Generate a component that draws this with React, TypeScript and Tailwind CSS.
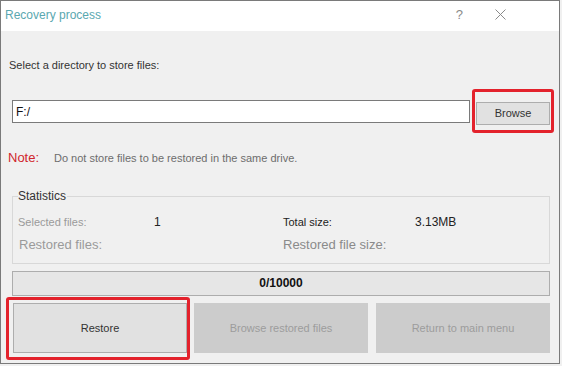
import React from "react";

function RedMark({ className }: { className: string }) {
  // annotation frame drawn over the control
  return <div className={`pointer-events-none absolute border-[3px] border-[#e3222c] rounded-[3px] ${className}`} />;
}

export default function App() {
  return (
    <div className="w-[562px] h-[366px] bg-[#f0f0f0] font-['Liberation_Sans',Arial,sans-serif]">
      <div className="w-[560px] h-[364px] border border-[#7a7a7a] flex flex-col bg-[#f0f0f0]">
        {/* title bar */}
        <div className="h-[30px] bg-white flex items-center pl-[4px] pb-[3px] shrink-0">
          <span className="text-[12px] text-[#5aa8b0]">Recovery process</span>
          <span className="ml-auto text-[13px] text-[#8a8a8a] mr-[32px]">?</span>
          <svg width="11" height="11" viewBox="0 0 11 11" className="mr-[53px]">
            <path d="M0.5 0.5 L10.5 10.5 M10.5 0.5 L0.5 10.5" stroke="#8a8a8a" strokeWidth="1" />
          </svg>
        </div>

        <div className="flex flex-col">
          <div className="mt-[28px] pl-[8px] text-[11px] leading-[13px] text-[#333]">
            Select a directory to store files:
          </div>

          <div className="mt-[28px] ml-[11px] flex items-start">
            <div className="w-[458px] h-[23px] bg-white border border-[#7a7a7a] flex items-center pl-[3px] text-[12px] text-[#111]">
              F:/
            </div>
            <div className="relative ml-[6px]">
              <button className="w-[74px] h-[23px] bg-[#e1e1e1] border border-[#adadad] text-[11px] text-[#333]">
                Browse
              </button>
              <RedMark className="-left-[4px] -top-[11px] -right-[4px] -bottom-[8px]" />
            </div>
          </div>

          <div className="mt-[25px] pl-[7px] flex items-center h-[16px]">
            <span className="text-[13px] text-[#d0262d] w-[46px]">Note:</span>
            <span className="text-[11px] text-[#6d6d6d]">Do not store files to be restored in the same drive.</span>
          </div>

          {/* statistics group */}
          <div className="relative mt-[30px] ml-[11px] w-[538px] h-[68px] border border-[#d8d8d8]">
            <span className="absolute left-[5px] -top-[8px] text-[12px] leading-[14px] text-[#333] bg-[#f0f0f0] pr-[1px]">
              Statistics
            </span>
            <div className="pl-[5px] pt-[18px] grid grid-cols-[136px_129px_132px_1fr] items-center">
              <span className="text-[11px] leading-[14px] text-[#9a9a9a]">Selected files:</span>
              <span className="text-[12px] leading-[14px] text-[#222]">1</span>
              <span className="text-[11px] leading-[14px] text-[#222]">Total size:</span>
              <span className="text-[12px] leading-[14px] text-[#222]">3.13MB</span>
              <span className="mt-[8px] text-[13px] leading-[16px] text-[#9a9a9a] pl-[1px]">Restored files:</span>
              <span className="mt-[8px]" />
              <span className="mt-[8px] text-[13px] leading-[16px] text-[#8a8a8a] col-span-2">Restored file size:</span>
            </div>
          </div>

          {/* progress */}
          <div className="mt-[7px] ml-[11px] w-[538px] h-[25px] bg-[#e6e6e6] border border-[#adadad] flex items-center justify-center text-[12px] font-bold text-[#111]">
            0/10000
          </div>

          {/* actions */}
          <div className="mt-[7px] ml-[12px] flex">
            <div className="relative">
              <button className="w-[174px] h-[50px] bg-[#e1e1e1] border border-[#adadad] text-[11px] text-[#333]">
                Restore
              </button>
              <RedMark className="-left-[7px] -top-[6px] -right-[3px] -bottom-[7px]" />
            </div>
            <button className="ml-[7px] w-[174px] h-[50px] bg-[#cccccc] text-[11px] text-[#9c9c9c]">
              Browse restored files
            </button>
            <button className="ml-[8px] w-[174px] h-[50px] bg-[#cccccc] text-[11px] text-[#9c9c9c]">
              Return to main menu
            </button>
          </div>
        </div>
      </div>
    </div>
  );
}
